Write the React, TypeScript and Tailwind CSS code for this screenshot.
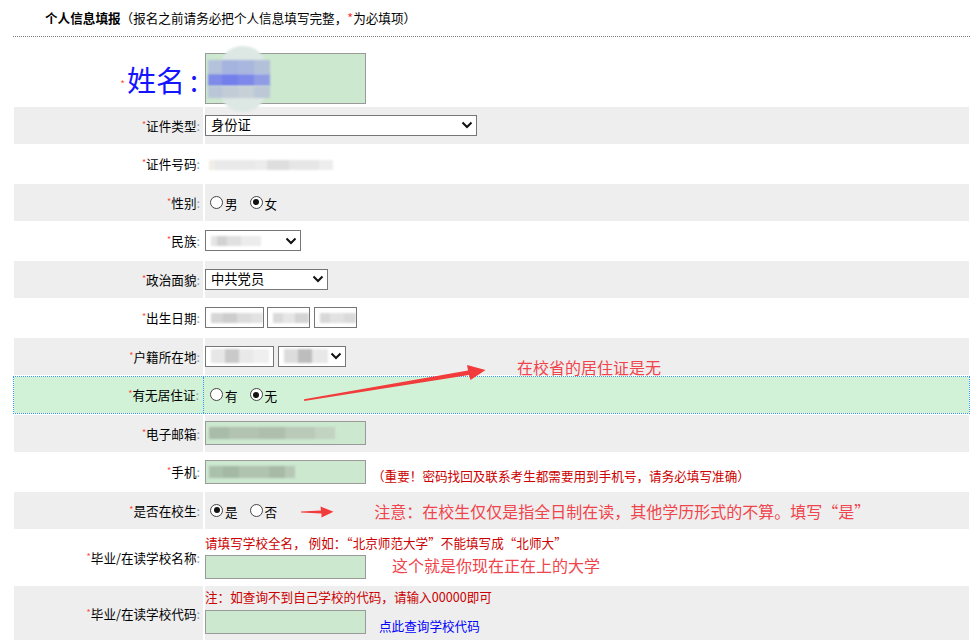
import React from "react";

type Block = [number, string];

function Star({ big = false }: { big?: boolean }) {
  return (
    <span
      className={
        big
          ? "text-[#ff5a3c] text-[10px] leading-none mr-[2px] mt-[10px]"
          : "text-[#ff4a3a] text-[9px] align-[3px]"
      }
    >
      *
    </span>
  );
}

function Label({ text }: { text: string }) {
  return (
    <span className="whitespace-nowrap text-[12.6px] leading-[18px] text-black">
      <Star />
      {text}
      <span className="text-[#8aa6c4]">:</span>
    </span>
  );
}

// blurred bits standing for hidden personal data
function Mosaic({ blocks, h = 10, className = "" }: { blocks: Block[]; h?: number; className?: string }) {
  return (
    <div className={`flex blur-[1px] ${className}`}>
      {blocks.map(([w, c], i) => (
        <div key={i} style={{ width: w, height: h, background: c }} />
      ))}
    </div>
  );
}

function Chevron() {
  return (
    <svg width="12" height="8" viewBox="0 0 12 8" className="shrink-0">
      <path d="M1.5 1.5 L6 6 L10.5 1.5" fill="none" stroke="#111" strokeWidth="2" />
    </svg>
  );
}

function SelectBox({
  w,
  children,
  chevron = true,
}: {
  w: string;
  children?: React.ReactNode;
  chevron?: boolean;
}) {
  return (
    <div
      className={`${w} h-[21px] border border-[#767676] bg-white flex items-center justify-between pl-[5px] pr-[3px] text-[13.3px] text-black overflow-hidden`}
    >
      <div className="flex items-center">{children}</div>
      {chevron && <Chevron />}
    </div>
  );
}

function Radio({ checked = false }: { checked?: boolean }) {
  return (
    <span className="w-[13px] h-[13px] rounded-full border border-[#444] bg-white flex items-center justify-center shrink-0">
      {checked && <span className="w-[6px] h-[6px] rounded-full bg-[#111]" />}
    </span>
  );
}

function RadioPair({ a, b, checked }: { a: string; b: string; checked: 0 | 1 }) {
  return (
    <div className="flex items-center text-[12.6px] text-black">
      <span className="ml-[5px]">
        <Radio checked={checked === 0} />
      </span>
      <span className="ml-[2px] mt-[4px]">{a}</span>
      <span className="ml-[12px]">
        <Radio checked={checked === 1} />
      </span>
      <span className="ml-[2px] mt-[4px]">{b}</span>
    </div>
  );
}

function GreenInput({ children, className = "" }: { children?: React.ReactNode; className?: string }) {
  return (
    <div className={`w-[161px] h-[24px] border border-[#9a9a9a] bg-[#cce8cf] flex items-center pl-[3px] ${className}`}>
      {children}
    </div>
  );
}

function Row({
  label,
  grey,
  h,
  children,
  valueClass = "flex items-center",
}: {
  label: string;
  grey: boolean;
  h: string;
  children?: React.ReactNode;
  valueClass?: string;
}) {
  const bg = grey ? "bg-[#eeeeee]" : "bg-white";
  return (
    <div className={`flex gap-[2px] ${h}`}>
      <div className={`w-[189px] shrink-0 flex items-center justify-end pr-[3px] ${bg}`}>
        <Label text={label} />
      </div>
      <div className={`flex-1 min-w-0 ${bg} ${valueClass}`}>{children}</div>
    </div>
  );
}

export default function App() {
  return (
    <div className="relative w-[980px] h-[640px] overflow-hidden bg-white font-['Noto_Sans_CJK_SC','Noto_Sans',sans-serif]">
      <div className="ml-[13px] w-[957px] h-[37px] border-b border-dotted border-[#7a7a7a] flex items-center pl-[32px] text-[12.6px] text-black">
        <span className="font-bold">个人信息填报</span>
        <span>（报名之前请务必把个人信息填写完整，</span>
        <span className="text-[#ff3030]">*</span>
        <span>为必填项）</span>
      </div>

      <div className="mt-[1px] ml-[14px] w-[955px] flex flex-col gap-[2px]">
        {/* name */}
        <div className="flex gap-[2px] h-[67px]">
          <div className="w-[189px] shrink-0 flex items-center justify-end pr-[5px] pt-[14px] text-[#1414ff]">
            <Star big />
            <span className="text-[29px] leading-[32px] whitespace-nowrap">姓名</span>
            <span className="text-[29px] leading-[32px] ml-[5px]">:</span>
          </div>
          <div className="flex-1 pt-[15px]">
            <div className="relative w-[161px] h-[51px] border border-[#9a9a9a] bg-[#cce8cf]">
              <div className="absolute left-[14px] -top-[8px] w-[46px] h-[66px] rounded-[22px] bg-[#dde8e4] blur-[1px]" />
              <div className="absolute left-[2px] top-[6px]">
                <Mosaic
                  h={14}
                  blocks={[
                    [14, "#b4c2dc"],
                    [16, "#a5b3df"],
                    [16, "#a9b6dd"],
                    [16, "#b3c0da"],
                  ]}
                />
                <Mosaic
                  h={12}
                  blocks={[
                    [14, "#7f8ae9"],
                    [16, "#7380ec"],
                    [16, "#7d88ea"],
                    [16, "#909de4"],
                  ]}
                />
                <Mosaic
                  h={12}
                  blocks={[
                    [14, "#b9c6d8"],
                    [16, "#c1ccd7"],
                    [16, "#c6d0d6"],
                    [16, "#bcc8d6"],
                  ]}
                />
              </div>
            </div>
          </div>
        </div>

        <Row label="证件类型" grey h="h-[36.5px]">
          <SelectBox w="w-[272px]">身份证</SelectBox>
        </Row>

        <Row label="证件号码" grey={false} h="h-[36.5px]">
          <Mosaic
            className="ml-[4px] mt-[2px]"
            blocks={[
              [6, "#f0ede6"],
              [40, "#e9e9e9"],
              [12, "#ececec"],
              [22, "#dedede"],
              [30, "#e6e6e6"],
              [14, "#ededed"],
            ]}
          />
        </Row>

        <Row label="性别" grey h="h-[36.5px]">
          <RadioPair a="男" b="女" checked={1} />
        </Row>

        <Row label="民族" grey={false} h="h-[36.5px]">
          <SelectBox w="w-[96px]">
            <Mosaic
              blocks={[
                [6, "#e4e4e4"],
                [10, "#d2d2d2"],
                [14, "#e0e0e0"],
                [20, "#ececec"],
              ]}
            />
          </SelectBox>
        </Row>

        <Row label="政治面貌" grey h="h-[36.5px]">
          <SelectBox w="w-[123px]">中共党员</SelectBox>
        </Row>

        <Row label="出生日期" grey={false} h="h-[36.5px]">
          <div className="flex items-center">
            <SelectBox w="w-[59px]" chevron={false}>
              <Mosaic
                blocks={[
                  [12, "#d6d6d6"],
                  [14, "#cdcdcd"],
                  [14, "#dcdcdc"],
                  [12, "#e2e2e2"],
                ]}
              />
            </SelectBox>
            <div className="ml-[3px]">
              <SelectBox w="w-[43px]" chevron={false}>
                <Mosaic
                  blocks={[
                    [10, "#dadada"],
                    [12, "#e6e6e6"],
                    [14, "#d4d4d4"],
                  ]}
                />
              </SelectBox>
            </div>
            <div className="ml-[4px]">
              <SelectBox w="w-[43px]" chevron={false}>
                <Mosaic
                  blocks={[
                    [10, "#d8d8d8"],
                    [14, "#e2e2e2"],
                    [12, "#dadada"],
                  ]}
                />
              </SelectBox>
            </div>
          </div>
        </Row>

        <Row label="户籍所在地" grey h="h-[36.5px]">
          <div className="flex items-center">
            <SelectBox w="w-[69px]" chevron={false}>
              <Mosaic
                h={14}
                blocks={[
                  [14, "#e6e6e6"],
                  [14, "#c9c9c9"],
                  [14, "#e9e9e9"],
                  [16, "#efefef"],
                ]}
              />
            </SelectBox>
            <div className="ml-[4px]">
              <SelectBox w="w-[68px]">
                <Mosaic
                  h={14}
                  blocks={[
                    [14, "#dcdcdc"],
                    [14, "#bdbdbd"],
                    [16, "#e8e8e8"],
                  ]}
                />
              </SelectBox>
            </div>
          </div>
        </Row>

        {/* focused row */}
        <div className="flex h-[36.5px] bg-[#d1f2d6] outline outline-1 outline-dotted outline-[#2b9cf2]">
          <div className="w-[190px] shrink-0 flex items-center justify-end pr-[4px] border-r border-dotted border-[#2b9cf2]">
            <Label text="有无居住证" />
          </div>
          <div className="flex-1 flex items-center pl-[1px]">
            <RadioPair a="有" b="无" checked={1} />
          </div>
        </div>

        <Row label="电子邮箱" grey h="h-[36.5px]">
          <GreenInput>
            <Mosaic
              h={12}
              blocks={[
                [20, "#a9bca9"],
                [30, "#b2c3b1"],
                [26, "#aebfad"],
                [30, "#b9cab8"],
                [20, "#c2d3c1"],
              ]}
            />
          </GreenInput>
        </Row>

        <Row label="手机" grey={false} h="h-[36.5px]">
          <GreenInput>
            <Mosaic
              h={12}
              blocks={[
                [14, "#aac0aa"],
                [16, "#a4b9a4"],
                [30, "#b0c3af"],
                [16, "#a6baa5"],
                [10, "#b7c9b6"],
              ]}
            />
          </GreenInput>
          <span className="ml-[6px] mt-[10px] text-[12.6px] text-[#cc0000] whitespace-nowrap">
            （重要！密码找回及联系考生都需要用到手机号，请务必填写准确）
          </span>
        </Row>

        <Row label="是否在校生" grey h="h-[36.5px]">
          <RadioPair a="是" b="否" checked={0} />
          <svg width="34" height="12" viewBox="0 0 34 12" className="ml-[24px] mt-[3px] shrink-0">
            <polygon
              points="0,5.6 20,4.6 19.5,0.5 32.5,5.8 20.5,11.5 20.5,7.4 0,6.6"
              fill="#f23b3b"
            />
          </svg>
          <span className="ml-[39px] mt-[2px] text-[16px] text-[#f0444c] whitespace-nowrap">
            注意：在校生仅仅是指全日制在读，其他学历形式的不算。填写“是”
          </span>
        </Row>

        <Row label="毕业/在读学校名称" grey={false} h="h-[53.5px]" valueClass="flex flex-col pt-[3px]">
          <span className="text-[12.6px] leading-[18px] text-[#cc0000] whitespace-nowrap">
            请填写学校全名， 例如：“北京师范大学”不能填写成“北师大”
          </span>
          <div className="flex items-start mt-[3px]">
            <GreenInput />
            <span className="ml-[26px] text-[16px] leading-[20px] text-[#f0444c] whitespace-nowrap">
              这个就是你现在正在上的大学
            </span>
          </div>
        </Row>

        <Row label="毕业/在读学校代码" grey h="h-[54px]" valueClass="flex flex-col pt-[2px]">
          <span className="text-[12.6px] leading-[18px] text-[#cc0000] whitespace-nowrap">
            注：如查询不到自己学校的代码，请输入00000即可
          </span>
          <div className="flex items-end mt-[4px]">
            <GreenInput />
            <span className="ml-[13px] -mb-[1px] text-[12.6px] leading-[18px] text-[#0000ff] whitespace-nowrap">
              点此查询学校代码
            </span>
          </div>
        </Row>
      </div>

      {/* annotation overlay */}
      <svg width="980" height="640" className="absolute left-0 top-0 pointer-events-none">
        <polygon
          points="304,399.2 468,370.4 467,365 485.5,370 470.5,380 469,375 304.3,400.9"
          fill="#f23b3b"
        />
      </svg>
      <span className="absolute left-[517px] top-[358px] text-[16px] leading-[18px] text-[#f0444c] whitespace-nowrap">
        在校省的居住证是无
      </span>
    </div>
  );
}
